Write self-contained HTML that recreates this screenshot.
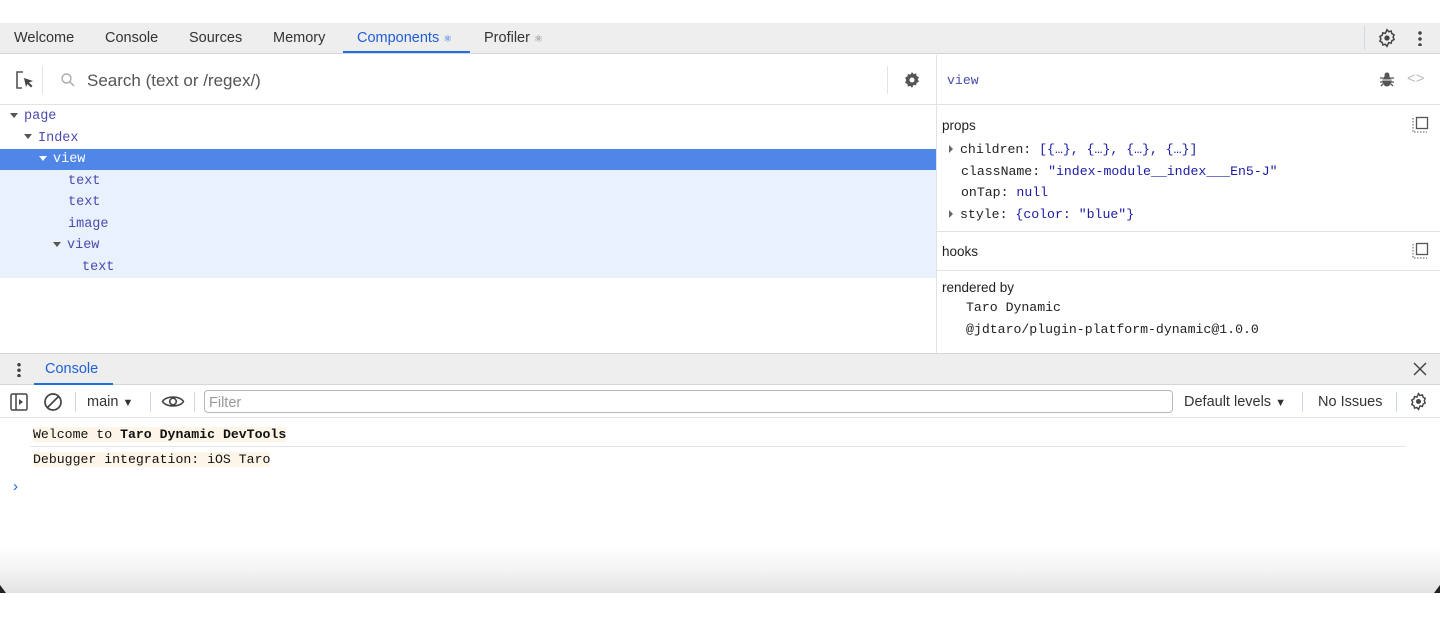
<!DOCTYPE html>
<html><head><style>
*{margin:0;padding:0;box-sizing:border-box}
body{width:1440px;height:618px;background:#fff;font-family:"Liberation Sans",sans-serif;position:relative;overflow:hidden;color:#333}
.a{position:absolute}
.tab{position:absolute;top:30px;font-size:14.5px;color:#333}
.row{position:absolute;left:0;width:936px;height:21.5px;font-family:"Liberation Mono",monospace;font-size:13.5px;color:#4b4bb0;line-height:21.5px}
.tri{display:inline-block;width:0;height:0;border-left:4px solid transparent;border-right:4px solid transparent;border-top:5px solid #555;vertical-align:middle;margin-right:6px}
.p{position:absolute;font-family:"Liberation Mono",monospace;font-size:13.2px;color:#222}
.p b{font-weight:normal;color:#1a1aa6}
.rt{display:inline-block;width:0;height:0;border-top:4px solid transparent;border-bottom:4px solid transparent;border-left:4px solid #666;margin-right:7px}
</style></head><body>
<div class="a" style="left:0;top:23px;width:1440px;height:31px;background:#eeeeee;border-bottom:1px solid #d6d6d6"></div>
<div class="tab" style="left:14px">Welcome</div>
<div class="tab" style="left:105px">Console</div>
<div class="tab" style="left:189px">Sources</div>
<div class="tab" style="left:273px">Memory</div>
<div class="tab" style="left:357px;color:#1f5fd6">Components <span style="font-size:10px">⚛</span></div>
<div class="a" style="left:343px;top:51px;width:127px;height:2px;background:#1f6fe0"></div>
<div class="tab" style="left:484px">Profiler <span style="font-size:10px;color:#777">⚛</span></div>
<div class="a" style="left:1364px;top:26px;width:1px;height:24px;background:#d0d8e8"></div>
<svg class="a" style="left:1377px;top:28px" width="20" height="20" viewBox="0 0 24 24"><path d="M12 2l2 2.5 3-.8.8 3 2.7 1.5-1.2 2.8 1.2 2.8-2.7 1.5-.8 3-3-.8L12 22l-2-2.5-3 .8-.8-3-2.7-1.5L4.7 13 3.5 10.2 6.2 8.7l.8-3 3 .8z" fill="none" stroke="#444" stroke-width="1.8"/><circle cx="12" cy="12" r="3.2" fill="#444"/></svg>
<div class="a" style="left:1418px;top:30px;width:4px;height:16px;background:radial-gradient(circle,#444 1.6px,transparent 2px) 0 0/4px 6px"></div>

<div class="a" style="left:0;top:104px;width:936px;height:1px;background:#e2e2e2"></div>
<div class="a" style="left:936px;top:55px;width:1px;height:298px;background:#e2e2e2"></div>
<svg class="a" style="left:15px;top:70px" width="20" height="20" viewBox="0 0 20 20"><path d="M8 2H2v16h5" fill="none" stroke="#555" stroke-width="1.6"/><path d="M9 8l9 3-4 1.5 3.5 3.5-1.5 1.5-3.5-3.5L11 17z" fill="#444"/></svg>
<div class="a" style="left:42px;top:66px;width:1px;height:28px;background:#e4e4e4"></div>
<svg class="a" style="left:60px;top:72px" width="16" height="16" viewBox="0 0 16 16"><circle cx="6.5" cy="6.5" r="4.5" fill="none" stroke="#aaa" stroke-width="1.4"/><path d="M10 10l4 4" stroke="#aaa" stroke-width="1.5"/></svg>
<div class="a" style="left:87px;top:71px;font-size:17px;color:#555">Search (text or /regex/)</div>
<div class="a" style="left:887px;top:66px;width:1px;height:28px;background:#e4e4e4"></div>
<svg class="a" style="left:903px;top:71px" width="18" height="18" viewBox="0 0 24 24"><path d="M12 1.5l2.2 2.6 3.3-.9.6 3.4 3.1 1.5-1.4 3.1 1.4 3.1-3.1 1.5-.6 3.4-3.3-.9L12 22.5l-2.2-2.6-3.3.9-.6-3.4-3.1-1.5L4.2 12 2.8 8.9l3.1-1.5.6-3.4 3.3.9z" fill="#555"/><circle cx="12" cy="12" r="3.3" fill="#fff"/></svg>

<div class="a" style="left:0;top:170px;width:936px;height:108px;background:#e9f1fd"></div>
<div class="a" style="left:0;top:149px;width:936px;height:21px;background:#4f86e8"></div>
<div class="row" style="top:106px;padding-left:10px"><span class="tri"></span>page</div>
<div class="row" style="top:127.5px;padding-left:24px"><span class="tri"></span>Index</div>
<div class="row" style="top:149px;padding-left:39px;color:#fff"><span class="tri" style="border-top-color:#fff"></span>view</div>
<div class="row" style="top:170.5px;padding-left:68px">text</div>
<div class="row" style="top:192px;padding-left:68px">text</div>
<div class="row" style="top:213.5px;padding-left:68px">image</div>
<div class="row" style="top:235px;padding-left:53px"><span class="tri"></span>view</div>
<div class="row" style="top:256.5px;padding-left:82px">text</div>

<div class="p" style="left:947px;top:73px;color:#4b4bb0">view</div>
<svg class="a" style="left:1379px;top:71px" width="16" height="17" viewBox="0 0 16 17"><ellipse cx="8" cy="10" rx="4.5" ry="5.5" fill="#555"/><circle cx="8" cy="4" r="2.5" fill="#555"/><path d="M1 7h3M12 7h3M1 11h3M12 11h3M2 15l2-2M14 15l-2-2" stroke="#555" stroke-width="1.3"/><path d="M4 9h8" stroke="#fff"/></svg>
<div class="a" style="left:1407px;top:70px;font-size:15px;color:#bbb">&lt;&gt;</div>
<div class="a" style="left:937px;top:104px;width:503px;height:1px;background:#e2e2e2"></div>
<div class="a" style="left:942px;top:118px;font-size:13.5px;color:#222">props</div>
<svg class="a" style="left:1412px;top:116px" width="17" height="17" viewBox="0 0 17 17"><rect x="4.5" y="1.5" width="11" height="11" fill="none" stroke="#555" stroke-width="1.3"/><path d="M1 2v14h14" stroke="#555" stroke-dasharray="1.5 1.5" fill="none"/></svg>
<div class="p" style="left:949px;top:142px"><span class="rt"></span>children: <b>[{…}, {…}, {…}, {…}]</b></div>
<div class="p" style="left:961px;top:164px">className: <b>"index-module__index___En5-J"</b></div>
<div class="p" style="left:961px;top:185px">onTap: <b>null</b></div>
<div class="p" style="left:949px;top:207px"><span class="rt"></span>style: <b>{color: "blue"}</b></div>
<div class="a" style="left:937px;top:231px;width:503px;height:1px;background:#e2e2e2"></div>
<div class="a" style="left:942px;top:244px;font-size:13.5px;color:#222">hooks</div>
<svg class="a" style="left:1412px;top:242px" width="17" height="17" viewBox="0 0 17 17"><rect x="4.5" y="1.5" width="11" height="11" fill="none" stroke="#555" stroke-width="1.3"/><path d="M1 2v14h14" stroke="#555" stroke-dasharray="1.5 1.5" fill="none"/></svg>
<div class="a" style="left:937px;top:270px;width:503px;height:1px;background:#e2e2e2"></div>
<div class="a" style="left:942px;top:280px;font-size:13.5px;color:#222">rendered by</div>
<div class="p" style="left:966px;top:300px">Taro Dynamic</div>
<div class="p" style="left:966px;top:322px">@jdtaro/plugin-platform-dynamic@1.0.0</div>

<div class="a" style="left:0;top:353px;width:1440px;height:32px;background:#eeeeee;border-top:1px solid #d6d6d6;border-bottom:1px solid #d6d6d6"></div>
<div class="a" style="left:17px;top:362px;width:4px;height:15px;background:radial-gradient(circle,#444 1.6px,transparent 2px) 0 0/4px 5.5px"></div>
<div class="a" style="left:45px;top:361px;font-size:14.5px;color:#1f5fd6">Console</div>
<div class="a" style="left:34px;top:383px;width:79px;height:2px;background:#1f6fe0"></div>
<svg class="a" style="left:1413px;top:362px" width="14" height="14" viewBox="0 0 14 14"><path d="M1 1l12 12M13 1L1 13" stroke="#444" stroke-width="1.5"/></svg>
<div class="a" style="left:0;top:417px;width:1440px;height:1px;background:#e2e2e2"></div>
<svg class="a" style="left:10px;top:393px" width="18" height="18" viewBox="0 0 18 18"><rect x="1" y="1" width="16" height="16" rx="1.5" fill="none" stroke="#444" stroke-width="1.5"/><path d="M6 1v16" stroke="#444" stroke-width="1.5"/><path d="M9 6l4 3-4 3z" fill="#444"/></svg>
<svg class="a" style="left:43px;top:392px" width="20" height="20" viewBox="0 0 20 20"><circle cx="10" cy="10" r="8" fill="none" stroke="#444" stroke-width="1.7"/><path d="M4.5 15.5l11-11" stroke="#444" stroke-width="1.7"/></svg>
<div class="a" style="left:75px;top:392px;width:1px;height:20px;background:#d0d8e8"></div>
<div class="a" style="left:87px;top:394px;font-size:14.5px;color:#333">main <span style="font-size:11px">▼</span></div>
<div class="a" style="left:150px;top:392px;width:1px;height:20px;background:#d0d8e8"></div>
<svg class="a" style="left:161px;top:393px" width="24" height="17" viewBox="0 0 24 17"><path d="M1.5 8.5C5 2.5 19 2.5 22.5 8.5 19 14.5 5 14.5 1.5 8.5z" fill="none" stroke="#444" stroke-width="1.6"/><circle cx="12" cy="8.5" r="3.3" fill="none" stroke="#444" stroke-width="1.6"/></svg>
<div class="a" style="left:194px;top:392px;width:1px;height:20px;background:#d0d8e8"></div>
<div class="a" style="left:204px;top:390px;width:969px;height:23px;border:1px solid #b8b8b8;border-radius:4px"></div>
<div class="a" style="left:209px;top:395px;font-size:14.5px;color:#999">Filter</div>
<div class="a" style="left:1184px;top:394px;font-size:14.5px;color:#333">Default levels <span style="font-size:11px">▼</span></div>
<div class="a" style="left:1302px;top:392px;width:1px;height:20px;background:#d0d8e8"></div>
<div class="a" style="left:1318px;top:394px;font-size:14.5px;color:#333">No Issues</div>
<div class="a" style="left:1396px;top:392px;width:1px;height:20px;background:#d0d8e8"></div>
<svg class="a" style="left:1409px;top:392px" width="19" height="19" viewBox="0 0 24 24"><path d="M12 2l2 2.5 3-.8.8 3 2.7 1.5-1.2 2.8 1.2 2.8-2.7 1.5-.8 3-3-.8L12 22l-2-2.5-3 .8-.8-3-2.7-1.5L4.7 13 3.5 10.2 6.2 8.7l.8-3 3 .8z" fill="none" stroke="#444" stroke-width="1.8"/><circle cx="12" cy="12" r="3.2" fill="#444"/></svg>

<div class="p" style="left:33px;top:427px;background:#fdf6e8;color:#111">Welcome to <span style="font-weight:bold">Taro Dynamic DevTools</span></div>
<div class="a" style="left:30px;top:446px;width:1376px;height:1px;background:#e4e4e4"></div>
<div class="p" style="left:33px;top:452px;background:#fdf6e8;color:#111">Debugger integration: iOS Taro</div>
<div class="a" style="left:13px;top:478px;font-size:15px;color:#1f5fd6">›</div>

<div class="a" style="left:0;top:545px;width:1440px;height:48px;background:linear-gradient(#fff,#f3f3f3 55%,#e2e2e2);border-radius:0 0 8px 8px"></div>
<div class="a" style="left:0;top:585px;width:6px;height:8px;background:#222;clip-path:polygon(0 0,100% 100%,0 100%)"></div>
<div class="a" style="left:1434px;top:585px;width:6px;height:8px;background:#222;clip-path:polygon(100% 0,100% 100%,0 100%)"></div>
</body></html>
